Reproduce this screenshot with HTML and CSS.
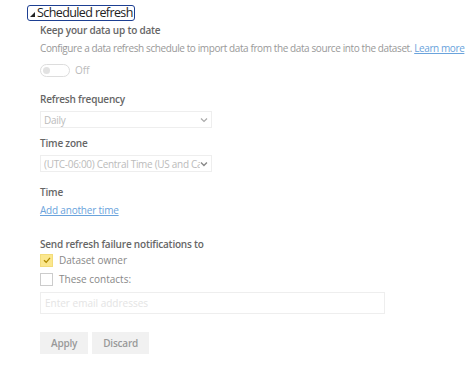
FILE: index.html
```html
<!DOCTYPE html>
<html>
<head>
    <title>Scheduled refresh</title>
    <link rel="stylesheet" href="styles.css">
</head>
<body>
    <div class="section-head">
        <span class="caret"></span>Scheduled refresh
    </div>
    <div class="panel">
        <p class="label">Keep your data up to date</p>
        <p class="desc">Configure a data refresh schedule to import data from the data source into the dataset. <a href="#" class="link">Learn more</a></p>

        <div class="toggle-row">
            <span class="toggle"><span class="knob"></span></span>
            <span class="toggle-text">Off</span>
        </div>

        <p class="label freq-label">Refresh frequency</p>
        <div class="select">
            <span>Daily</span>
            <svg width="8" height="6" viewBox="0 0 8 6"><path d="M1 1.5 L4 4.5 L7 1.5" fill="none" stroke="#aaa" stroke-width="1.2"/></svg>
        </div>

        <p class="label zone-label">Time zone</p>
        <div class="select">
            <span class="clip">(UTC-06:00) Central Time (US and Canada)</span>
            <svg width="8" height="6" viewBox="0 0 8 6"><path d="M1 1.5 L4 4.5 L7 1.5" fill="none" stroke="#888" stroke-width="1.4"/></svg>
        </div>

        <p class="label time-label">Time</p>
        <a href="#" class="link add-time">Add another time</a>

        <p class="label notify-label">Send refresh failure notifications to</p>
        <div class="check-row first">
            <span class="check checked">
                <svg width="10" height="10" viewBox="0 0 10 10"><path d="M2 5.2 L4.2 7.3 L8 2.8" fill="none" stroke="#b08a00" stroke-width="1.3"/></svg>
            </span>
            <span>Dataset owner</span>
        </div>
        <div class="check-row">
            <span class="check"></span>
            <span>These contacts:</span>
        </div>
        <div class="email">Enter email addresses</div>

        <div class="buttons">
            <button class="btn">Apply</button>
            <button class="btn">Discard</button>
        </div>
    </div>
</body>
</html>
```

FILE: styles.css
```css
body {
    margin: 0;
    background: #fff;
    font-family: "Open Sans", "Noto Sans", sans-serif;
    color: #555;
}

p {
    margin: 0;
}

.section-head {
    display: inline-flex;
    align-items: center;
    margin: 3px 0 0 27px;
    padding: 0 1px 0 2px;
    height: 14px;
    border: 1.5px solid #1d3f92;
    border-radius: 3px;
    font-size: 12.5px;
    letter-spacing: -0.6px;
    color: #222;
    line-height: 14px;
}

.caret {
    width: 0;
    height: 0;
    border-left: 5px solid transparent;
    border-bottom: 5px solid #222;
    margin-right: 2px;
    margin-top: 3px;
}

.panel {
    padding-left: 40px;
}

.label {
    font-size: 10px;
    font-weight: 600;
    letter-spacing: -0.2px;
    color: #666;
    line-height: 14px;
}

.panel > .label:first-child {
    margin-top: 1px;
}

.desc {
    margin-top: 4px;
    font-size: 10px;
    letter-spacing: -0.4px;
    white-space: nowrap;
    color: #999;
    line-height: 14px;
}

.link {
    color: #6aa3dc;
    text-decoration: underline;
}

.toggle-row {
    display: flex;
    align-items: center;
    margin-top: 8px;
    height: 14px;
}

.toggle {
    display: inline-flex;
    align-items: center;
    width: 26px;
    height: 11px;
    border: 1px solid #ddd;
    border-radius: 7px;
    padding-left: 2px;
}

.knob {
    width: 7px;
    height: 7px;
    border-radius: 50%;
    background: #e2e2e2;
}

.toggle-text {
    margin-left: 5px;
    font-size: 10px;
    color: #bbb;
}

.freq-label {
    margin-top: 15px;
}

.zone-label {
    margin-top: 8px;
}

.time-label {
    margin-top: 13px;
}

.select {
    box-sizing: border-box;
    display: flex;
    align-items: center;
    justify-content: space-between;
    width: 172px;
    height: 17px;
    margin-top: 5px;
    padding: 0 3px;
    border: 1px solid #eee;
    font-size: 10px;
    letter-spacing: -0.3px;
    color: #bbb;
}

.select .clip {
    white-space: nowrap;
    overflow: hidden;
    width: 158px;
}

.add-time {
    display: block;
    margin-top: 4px;
    font-size: 10px;
    letter-spacing: -0.2px;
    line-height: 14px;
}

.notify-label {
    margin-top: 20px;
}

.check-row {
    display: flex;
    align-items: center;
    gap: 6px;
    margin-top: 5px;
    font-size: 10px;
    color: #888;
    line-height: 14px;
}

.check-row.first {
    margin-top: 2px;
}

.check {
    display: inline-flex;
    align-items: center;
    justify-content: center;
    width: 11px;
    height: 11px;
    border: 1px solid #ccc;
    background: #fff;
}

.check.checked {
    border-color: #f3dc7a;
    background: #fbe78e;
}

.email {
    box-sizing: border-box;
    width: 345px;
    height: 22px;
    margin-top: 6px;
    padding-left: 4px;
    border: 1px solid #eee;
    font-size: 10px;
    line-height: 20px;
    color: #e4e4e4;
}

.buttons {
    display: flex;
    gap: 4px;
    margin-top: 18px;
}

.btn {
    height: 22px;
    padding: 0 11px;
    border: none;
    background: #f1f1f1;
    font-family: "Open Sans", sans-serif;
    font-size: 10px;
    font-weight: 600;
    letter-spacing: -0.2px;
    color: #999;
}
```
